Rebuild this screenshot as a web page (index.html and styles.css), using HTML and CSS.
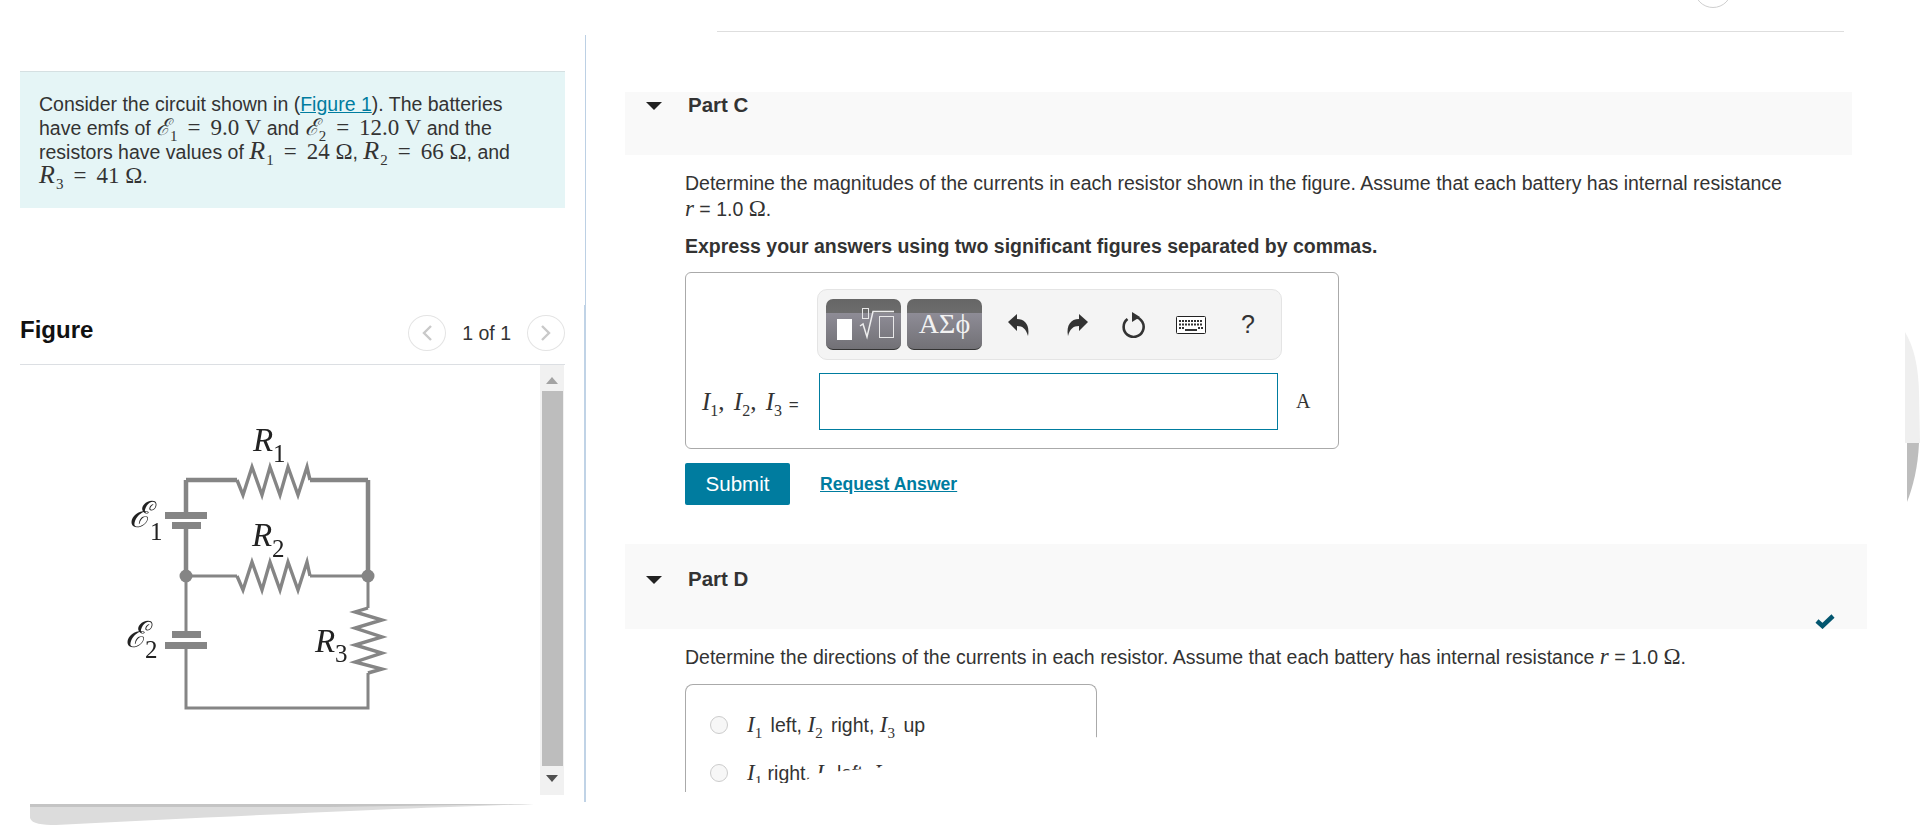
FILE: index.html
```html
<!DOCTYPE html>
<html>
<head>
  <meta charset="utf-8">
  <link rel="stylesheet" href="styles.css">
</head>
<body>

<div class="page">

  <div class="left">
    <div class="problem">
      Consider the circuit shown in (<a href="#" class="link">Figure 1</a>). The batteries have emfs of
      <span class="m"><i>ℰ</i><sub>1</sub><span class="eq">=</span>9.0 V</span> and <span class="m"><i>ℰ</i><sub>2</sub><span class="eq">=</span>12.0 V</span> and the
      resistors have values of <span class="m"><i class="rv">R</i><sub>1</sub><span class="eq">=</span>24 Ω</span>, <span class="m"><i class="rv">R</i><sub>2</sub><span class="eq">=</span>66 Ω</span>, and
      <span class="m"><i class="rv">R</i><sub>3</sub><span class="eq">=</span>41 Ω</span>.
    </div>

    <div class="fig-head">
      <h2>Figure</h2>
      <div class="pager">
        <span class="round"><svg width="12" height="18" viewBox="0 0 12 18"><path d="M10 2 L3 9 L10 16" fill="none" stroke="#c9c9c9" stroke-width="2.4"/></svg></span>
        <span class="count">1 of 1</span>
        <span class="round"><svg width="12" height="18" viewBox="0 0 12 18"><path d="M2 2 L9 9 L2 16" fill="none" stroke="#c9c9c9" stroke-width="2.4"/></svg></span>
      </div>
    </div>

    <div class="fig-body">
      <svg class="circuit" width="520" height="430" viewBox="20 365 520 430">
        <g fill="none" stroke="#858585" stroke-linejoin="miter">
          <path stroke-width="4.5" d="M186 480 V515 M186 525 V576 M368 480 V576 M186 480 H237 M310 480 H368"/>
          <path stroke-width="3" d="M186 576 H237 M310 576 H368 M368 576 V608 M186 576 V634 M186 645 V708 H368 V673"/>
          <path stroke-width="3.4" d="M237 480 L243 495 L252 467 L262 495 L270 467 L280 495 L288 467 L298 495 L307 467 L310 480"/>
          <path stroke-width="3.4" d="M237 576 L243 590 L252 562 L262 590 L270 562 L280 590 L288 562 L298 590 L307 562 L310 576"/>
          <path stroke-width="3.4" d="M368 608 L355 612 L382 620 L355 628 L382 637 L355 645 L382 653 L355 662 L382 669 L368 673"/>
        </g>
        <g fill="#858585">
          <rect x="165" y="512" width="42" height="7"/>
          <rect x="172" y="522" width="29" height="7"/>
          <rect x="172" y="631" width="29" height="7"/>
          <rect x="165" y="642" width="42" height="7"/>
          <circle cx="186" cy="576" r="6.5"/>
          <circle cx="368" cy="576" r="6.5"/>
        </g>
        <g class="clabel">
          <text x="253" y="451" class="it">R</text><text x="273" y="462" class="sb">1</text>
          <text x="252" y="546" class="it">R</text><text x="272" y="557" class="sb">2</text>
          <text x="315" y="652" class="it">R</text><text x="335" y="662" class="sb">3</text>
          <text x="129" y="527" class="sc">ℰ</text><text x="150" y="540" class="sb">1</text>
          <text x="125" y="647" class="sc">ℰ</text><text x="145" y="658" class="sb">2</text>
        </g>
      </svg>
      <div class="scroll">
        <span class="arrow-up"></span>
        <div class="thumb"></div>
        <span class="arrow-down"></span>
      </div>
    </div>
  </div>

  <div class="divider">
    <div class="div-top"></div>
    <div class="div-low"></div>
  </div>

  <div class="right">
    <div class="top-rule"></div>

    <div class="part-bar part-c">
      <span class="tri"></span>
      <span class="part-name">Part C</span>
    </div>

    <div class="part-body">
      <p class="q first">Determine the magnitudes of the currents in each resistor shown in the figure. Assume that each battery has internal resistance <span class="m"><i>r</i></span> = 1.0 <span class="m">Ω</span>.</p>
      <p class="q strong">Express your answers using two significant figures separated by commas.</p>

      <div class="answer">
        <div class="toolbar">
          <button type="button" class="tbtn">
            <svg width="75" height="51" viewBox="0 0 75 51">
              <rect x="11" y="20" width="15" height="21" fill="#fff"/>
              <rect x="36.500" y="9.500" width="6" height="10" fill="none" stroke="#e8e8e8"/>
              <path d="M34 27 L37 25 L41 38 L47 12.500 H68" fill="none" stroke="#eee" stroke-width="1.500"/>
              <rect x="53.500" y="17.500" width="14" height="21" fill="none" stroke="#e8e8e8"/>
            </svg>
          </button>
          <button type="button" class="tbtn"><span class="greek">ΑΣϕ</span></button>
          <div class="tools">
            <svg width="22" height="24" viewBox="0 0 22 24"><path fill="#333" d="M0 9 L9 1 V6 C17 6 22 12 20 23 C18 16 15 13 9 13 V18 Z"/></svg>
            <svg class="t-redo" width="22" height="24" viewBox="0 0 22 24"><path fill="#333" d="M22 9 L13 1 V6 C5 6 0 12 2 23 C4 16 7 13 13 13 V18 Z"/></svg>
            <svg width="26" height="26" viewBox="0 0 26 26"><path fill="none" stroke="#333" stroke-width="2.600" d="M6.500 7 A10 10 0 1 0 14 5"/><path fill="#333" d="M11 0 L19 5 L11 10 Z"/></svg>
            <svg class="t-kb" width="30" height="18" viewBox="0 0 30 18">
              <rect x="0.500" y="0.500" width="29" height="17" rx="1" fill="#fff" stroke="#222"/>
              <path stroke="#333" stroke-width="2" stroke-dasharray="2 1" fill="none" d="M3 5 H27 M3 8.500 H27 M3 12 H8 M22 12 H27"/>
              <path stroke="#333" stroke-width="2" d="M9 14 H21"/>
            </svg>
            <span class="help">?</span>
          </div>
        </div>
        <div class="input-row">
          <label class="ans-label"><span class="m"><i>I</i><sub>1</sub>, <i>I</i><sub>2</sub>, <i>I</i><sub>3</sub></span> =</label>
          <input type="text" class="ans-input">
          <span class="unit">A</span>
        </div>
      </div>

      <div class="actions">
        <button type="button" class="submit">Submit</button>
        <a href="#" class="req">Request Answer</a>
      </div>
    </div>

    <div class="part-bar part-d">
      <span class="tri"></span>
      <span class="part-name">Part D</span>
      <svg class="check" width="20" height="16" viewBox="0 0 20 16"><path d="M2 8 L7.500 13 L18 3" fill="none" stroke="#03566f" stroke-width="4.500"/></svg>
    </div>

    <div class="part-body">
      <p class="q">Determine the directions of the currents in each resistor. Assume that each battery has internal resistance <span class="m"><i>r</i></span> = 1.0 <span class="m">Ω</span>.</p>
      <div class="options">
        <div class="opt"><span class="radio"></span><span><span class="m"><i>I</i><sub>1</sub></span> left, <span class="m"><i>I</i><sub>2</sub></span> right, <span class="m"><i>I</i><sub>3</sub></span> up</span></div>
        <div class="opt"><span class="radio"></span><span><span class="m"><i>I</i><sub>1</sub></span> right, <span class="m"><i>I</i><sub>2</sub></span> left, <span class="m"><i>I</i><sub>3</sub></span> up</span></div>
      </div>
    </div>
  </div>

  <!-- leftovers of the page capture, they lie over the content -->
  <div class="arc"></div>
  <div class="opt-cover"></div>
  <svg class="sliver-bottom" width="510" height="22" viewBox="0 0 510 22"><path fill="#dcdcdc" d="M0 0 H504 C400 3 200 12 26 21 C12 21 2 20 0 14 Z"/><path fill="#c4c4c4" d="M0 0 H504 L300 3 L0 3 Z"/></svg>
  <svg class="sliver-right" width="15" height="184" viewBox="0 0 15 184"><path fill="#efefef" d="M0 0 C8 14 13 30 14 60 L15 111 H0 Z"/><path fill="#bdbdbd" d="M2 111 H14 C13 135 8 155 2 170 Z"/></svg>

</div>

</body>
</html>
```

FILE: styles.css
```css
* {box-sizing: border-box}

body {
  margin: 0;
  background: #fff;
  color: #333;
  font-family: "Liberation Sans", Arial, sans-serif;
  font-size: 19.5px;
}

.page {
  position: relative;
  display: flex;
  height: 825px;
  overflow: hidden;
}

/* math text */
.m {
  font-family: "Liberation Serif", "DejaVu Serif", serif;
  font-size: 23px;
  white-space: nowrap;
}

.m sub {
  font-size: 15px;
  line-height: 0;
}

.rv {
  margin-right: 1px;
  font-size: 26px;
  line-height: 0;
}

.eq {
  margin: 0 10px;
}

.link {
  color: #007c9f;
}

/* left column */
.left {
  width: 584px;
  padding-left: 20px;
}

.problem {
  width: 545px;
  height: 137px;
  margin-top: 71px;
  padding: 20px 25px 0 19px;
  line-height: 24px;
  background: #e5f5f6;
  border-top: 1px solid #d5e0e2;
}

.fig-head {
  display: flex;
  justify-content: space-between;
  width: 545px;
  height: 157px;
  padding-top: 107px;
  border-bottom: 1px solid #dcdfe3;
}

.fig-head h2 {
  margin: 0;
  font-size: 24px;
  line-height: 30px;
  color: #111;
}

.pager {
  display: flex;
  align-items: center;
  height: 36px;
}

.round {
  display: flex;
  align-items: center;
  justify-content: center;
  width: 38px;
  height: 36px;
  border: 1px solid #e4e4e4;
  border-radius: 50%;
}

.count {
  margin: 0 16px;
}

.fig-body {
  display: flex;
  width: 544px;
  height: 430px;
}

.circuit {
  display: block;
  width: 520px;
  filter: blur(0.4px);
}

.clabel text {
  font-family: "Liberation Serif", "DejaVu Serif", serif;
  fill: #222;
}

.clabel .it {
  font-size: 33px;
  font-style: italic;
}

.clabel .sc {
  font-size: 36px;
  font-style: italic;
}

.clabel .sb {
  font-size: 25px;
}

.scroll {
  display: flex;
  flex-direction: column;
  align-items: center;
  width: 24px;
  background: #f1f1f1;
}

.thumb {
  width: 21px;
  height: 375px;
  margin: 7px 0 9px 0;
  background: #bdbdbd;
}

.arrow-up, .arrow-down {
  width: 0;
  height: 0;
  border-left: 6px solid transparent;
  border-right: 6px solid transparent;
}

.arrow-up {
  margin-top: 12px;
  border-bottom: 7px solid #a3a3a3;
}

.arrow-down {
  border-top: 7px solid #505050;
}

/* divider between the columns */
.divider {
  display: flex;
  flex-direction: column;
  align-items: flex-end;
  width: 2px;
  height: 767px;
  margin-top: 35px;
}

.div-top {
  width: 1px;
  height: 270px;
  background: #bcd0e4;
}

.div-low {
  width: 2px;
  height: 497px;
  background: #c0d3e6;
}

/* right column */
.right {
  flex: 1;
  min-width: 0;
  padding-left: 39px;
}

.top-rule {
  width: 1127px;
  height: 1px;
  margin: 31px 0 0 92px;
  background: #dedede;
}

.part-bar {
  position: relative;
  display: flex;
  padding-left: 21px;
  background: #f9f9f9;
}

.part-c {
  width: 1227px;
  height: 63px;
  margin-top: 60px;
  padding-top: 1px;
}

.part-d {
  width: 1242px;
  height: 85px;
  margin-top: 39px;
  padding-top: 23px;
}

.tri {
  width: 0;
  height: 0;
  margin-top: 9px;
  border-left: 8px solid transparent;
  border-right: 8px solid transparent;
  border-top: 8px solid #222;
}

.part-name {
  margin-left: 26px;
  font-size: 20.5px;
  font-weight: bold;
  line-height: 24px;
}

.check {
  position: absolute;
  right: 32px;
  bottom: 0;
}

.part-body {
  padding-left: 60px;
}

.q {
  width: 1105px;
  margin: 15px 0 0 0;
  line-height: 25px;
}

.first {
  margin-top: 16px;
}

.strong {
  margin-top: 12px;
  font-weight: bold;
}

/* answer box */
.answer {
  width: 654px;
  height: 177px;
  margin-top: 13px;
  padding: 16px 0 0 131px;
  background: #fff;
  border: 1px solid #aaa;
  border-radius: 6px;
}

.toolbar {
  display: flex;
  gap: 6px;
  width: 465px;
  height: 71px;
  padding: 9px 0 0 8px;
  background: #f4f4f4;
  border: 1px solid #e4e4e4;
  border-radius: 10px;
}

.tbtn {
  width: 75px;
  height: 51px;
  padding: 0;
  border: none;
  border-bottom: 1px solid #333;
  border-radius: 7px;
  background: linear-gradient(#666 0, #6c6c6c 27%, #8e8c96 28%, #727176 100%);
}

.tbtn svg {
  display: block;
}

.greek {
  font-family: "Liberation Serif", "DejaVu Serif", serif;
  font-size: 28px;
  color: #f2f2f2;
}

.tools {
  display: flex;
  align-items: center;
  height: 51px;
  margin-left: 20px;
  gap: 33px;
}

.tools svg {
  display: block;
}

.t-redo {
  margin-left: 3px;
}

.t-kb {
  margin-left: -4px;
}

.help {
  margin-left: 2px;
  font-size: 25px;
  color: #333;
}

.input-row {
  display: flex;
  align-items: center;
  height: 57px;
  margin: 13px 0 0 -115px;
}

.ans-label {
  flex: none;
  width: 117px;
  font-size: 17px;
  white-space: nowrap;
}

.ans-label .m {
  margin-right: 2px;
  font-size: 25px;
  word-spacing: 3px;
}

.ans-label sub {
  font-size: 16px;
}

.ans-input {
  width: 459px;
  height: 57px;
  border: 1px solid #007c9f;
  background: #fff;
  outline: none;
}

.unit {
  margin-left: 18px;
  font-family: "Liberation Serif", serif;
  font-size: 20px;
}

.actions {
  display: flex;
  align-items: center;
  margin-top: 14px;
}

.submit {
  width: 105px;
  height: 42px;
  padding: 0;
  border: none;
  border-radius: 2px;
  background: #007c9f;
  color: #fff;
  font-family: inherit;
  font-size: 20.5px;
}

.req {
  margin-left: 30px;
  color: #007c9f;
  font-size: 17.6px;
  font-weight: bold;
}

/* radio options, cut off by the capture */
.options {
  width: 412px;
  height: 108px;
  margin-top: 14px;
  padding: 28px 0 0 24px;
  overflow: hidden;
  border: 1px solid #aaa;
  border-bottom: none;
  border-radius: 8px 8px 0 0;
}

.opt {
  display: flex;
  align-items: center;
  gap: 19px;
  height: 24px;
  margin-bottom: 24px;
  white-space: nowrap;
}

.opt .m {
  margin-right: 3px;
}

.opt + .opt .m {
  margin-right: 0;
}

.radio {
  width: 18px;
  height: 18px;
  background: #f7f7f7;
  border: 1px solid #ccc;
  border-radius: 50%;
}

.arc {
  position: absolute;
  left: 1694px;
  top: -30px;
  width: 38px;
  height: 38px;
  border: 1px solid #cfcfcf;
  border-radius: 50%;
}

.opt-cover {
  position: absolute;
  left: 750px;
  top: 737px;
  width: 360px;
  height: 60px;
  background: #fff;
  clip-path: polygon(100% 0, 100% 100%, 0 100%, 0 46px, 50px 46px, 70px 36px, 134px 30px, 348px 0);
}

.sliver-bottom {
  position: absolute;
  left: 30px;
  top: 804px;
}

.sliver-right {
  position: absolute;
  left: 1905px;
  top: 332px;
}
```
